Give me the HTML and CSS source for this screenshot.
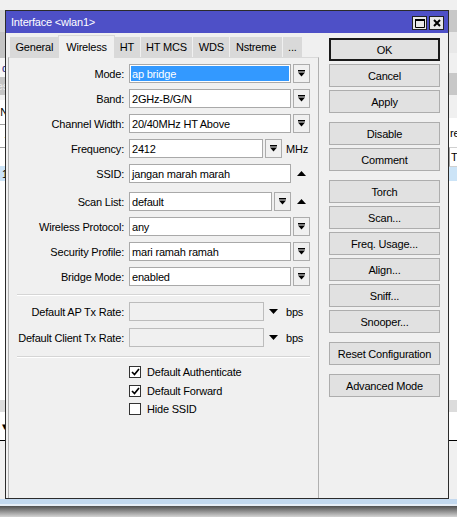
FILE: index.html
```html
<!DOCTYPE html>
<html>
<head>
<meta charset="utf-8">
<title>Interface &lt;wlan1&gt;</title>
<link rel="stylesheet" href="styles.css">
</head>
<body>
<div class="desk">
  <div class="desk-top">
    <div class="strip strip-l">
      <div class="bd c-f0 h10"></div>
      <div class="bd c-d4 h22"></div>
      <div class="bd c-c4 h26"></div>
      <div class="bd c-f7 h19 fr-blue">d</div>
      <div class="bd c-c4 h18 fr-light">es</div>
      <div class="bd c-f0 h5"></div>
      <div class="bd c-ff h24">N</div>
      <div class="bd c-ff h23 line-t">-</div>
      <div class="bd c-ff h19 line-t"></div>
      <div class="bd c-sel h15">1</div>
      <div class="bd c-ff h219"></div>
      <div class="bd c-dc h12"></div>
      <div class="bd c-ff h28">▾</div>
      <div class="bd c-f0 fill line-k"></div>
    </div>
    <div class="desk-mid"></div>
    <div class="strip strip-r">
      <div class="bd c-f0 h10"></div>
      <div class="bd c-c8 h22"></div>
      <div class="bd c-e8 h21"></div>
      <div class="bd c-f0 h20"></div>
      <div class="bd c-c8 h22"></div>
      <div class="bd c-f0 h23"></div>
      <div class="bd c-ff h29">rel</div>
      <div class="bd c-ff h20 hdr">T</div>
      <div class="bd c-sel h14"></div>
      <div class="bd c-ff h219"></div>
      <div class="bd c-dc h12"></div>
      <div class="bd c-ff h28"></div>
      <div class="bd c-f0 fill line-k"></div>
    </div>
  </div>
  <div class="taskbar"></div>
</div>

<div class="win">
  <div class="title">
    <span class="title-text">Interface &lt;wlan1&gt;</span>
    <div class="tbtns">
      <span class="tbtn"><svg width="10" height="9" viewBox="0 0 10 9"><path d="M0.5 0.5h9v8h-9z" fill="none" stroke="#000"/><rect x="0" y="0" width="10" height="2" fill="#000"/></svg></span>
      <span class="tbtn"><svg width="8" height="8" viewBox="0 0 8 8"><path d="M1 1L7 7M7 1L1 7" stroke="#000" stroke-width="2"/></svg></span>
    </div>
  </div>
  <div class="body">
    <div class="left">
      <div class="tabs">
        <div class="tab">General</div>
        <div class="tab sel">Wireless</div>
        <div class="tab">HT</div>
        <div class="tab">HT MCS</div>
        <div class="tab">WDS</div>
        <div class="tab">Nstreme</div>
        <div class="tab">...</div>
      </div>
      <div class="panel">
        <div class="row">
          <span class="lbl">Mode:</span>
          <div class="inp w162 hl"><span class="hl-fill">ap bridge</span></div>
          <span class="dd"><svg width="7" height="7" viewBox="0 0 7 7"><rect x="0" y="0" width="7" height="1.5"/><path d="M0 2.5H7L3.5 6.5z"/></svg></span>
        </div>
        <div class="row">
          <span class="lbl">Band:</span>
          <div class="inp w162">2GHz-B/G/N</div>
          <span class="dd"><svg width="7" height="7" viewBox="0 0 7 7"><rect x="0" y="0" width="7" height="1.5"/><path d="M0 2.5H7L3.5 6.5z"/></svg></span>
        </div>
        <div class="row">
          <span class="lbl">Channel Width:</span>
          <div class="inp w162">20/40MHz HT Above</div>
          <span class="dd"><svg width="7" height="7" viewBox="0 0 7 7"><rect x="0" y="0" width="7" height="1.5"/><path d="M0 2.5H7L3.5 6.5z"/></svg></span>
        </div>
        <div class="row">
          <span class="lbl">Frequency:</span>
          <div class="inp w134">2412</div>
          <span class="dd"><svg width="7" height="7" viewBox="0 0 7 7"><rect x="0" y="0" width="7" height="1.5"/><path d="M0 2.5H7L3.5 6.5z"/></svg></span>
          <span class="unit">MHz</span>
        </div>
        <div class="row gap9">
          <span class="lbl">SSID:</span>
          <div class="inp w162">jangan marah marah</div>
          <span class="up"><svg width="9" height="5" viewBox="0 0 9 5"><path d="M0 5H9L4.5 0z"/></svg></span>
        </div>
        <div class="row">
          <span class="lbl">Scan List:</span>
          <div class="inp w143">default</div>
          <span class="dd"><svg width="7" height="7" viewBox="0 0 7 7"><rect x="0" y="0" width="7" height="1.5"/><path d="M0 2.5H7L3.5 6.5z"/></svg></span>
          <span class="up"><svg width="9" height="5" viewBox="0 0 9 5"><path d="M0 5H9L4.5 0z"/></svg></span>
        </div>
        <div class="row">
          <span class="lbl">Wireless Protocol:</span>
          <div class="inp w162">any</div>
          <span class="dd"><svg width="7" height="7" viewBox="0 0 7 7"><rect x="0" y="0" width="7" height="1.5"/><path d="M0 2.5H7L3.5 6.5z"/></svg></span>
        </div>
        <div class="row">
          <span class="lbl">Security Profile:</span>
          <div class="inp w162">mari ramah ramah</div>
          <span class="dd"><svg width="7" height="7" viewBox="0 0 7 7"><rect x="0" y="0" width="7" height="1.5"/><path d="M0 2.5H7L3.5 6.5z"/></svg></span>
        </div>
        <div class="row">
          <span class="lbl">Bridge Mode:</span>
          <div class="inp w162">enabled</div>
          <span class="dd"><svg width="7" height="7" viewBox="0 0 7 7"><rect x="0" y="0" width="7" height="1.5"/><path d="M0 2.5H7L3.5 6.5z"/></svg></span>
        </div>
        <div class="sep sep1"></div>
        <div class="row gap7">
          <span class="lbl">Default AP Tx Rate:</span>
          <div class="inp w135 dis"></div>
          <span class="down"><svg width="9" height="5" viewBox="0 0 9 5"><path d="M0 0H9L4.5 5z"/></svg></span>
          <span class="bps">bps</span>
        </div>
        <div class="row">
          <span class="lbl">Default Client Tx Rate:</span>
          <div class="inp w135 dis"></div>
          <span class="down"><svg width="9" height="5" viewBox="0 0 9 5"><path d="M0 0H9L4.5 5z"/></svg></span>
          <span class="bps">bps</span>
        </div>
        <div class="sep sep2"></div>
        <div class="chk"><span class="cb"><svg width="9" height="8" viewBox="0 0 9 8"><path d="M1 4L3.5 6.5L8 1" fill="none" stroke="#000" stroke-width="1.7"/></svg></span>Default Authenticate</div>
        <div class="chk"><span class="cb"><svg width="9" height="8" viewBox="0 0 9 8"><path d="M1 4L3.5 6.5L8 1" fill="none" stroke="#000" stroke-width="1.7"/></svg></span>Default Forward</div>
        <div class="chk"><span class="cb"></span>Hide SSID</div>
      </div>
    </div>
    <div class="btns">
      <div class="btn def">OK</div>
      <div class="btn">Cancel</div>
      <div class="btn">Apply</div>
      <div class="btn grp">Disable</div>
      <div class="btn">Comment</div>
      <div class="btn grp">Torch</div>
      <div class="btn">Scan...</div>
      <div class="btn">Freq. Usage...</div>
      <div class="btn">Align...</div>
      <div class="btn">Sniff...</div>
      <div class="btn">Snooper...</div>
      <div class="btn grp">Reset Configuration</div>
      <div class="btn grp">Advanced Mode</div>
    </div>
  </div>
</div>
</body>
</html>
```

FILE: styles.css
```css
* { box-sizing: border-box; }
html, body { margin: 0; padding: 0; }
body {
  width: 457px;
  height: 517px;
  overflow: hidden;
  position: relative;
  font-family: "Liberation Sans", Arial, sans-serif;
  font-size: 11px;
  letter-spacing: -0.2px;
  color: #000;
  background: #f0f0f0;
}

/* background application (partly hidden behind the window) */
.desk { display: flex; flex-direction: column; height: 517px; }
.desk-top { display: flex; height: 499px; }
.strip { display: flex; flex-direction: column; overflow: hidden; }
.strip-l { width: 12px; }
.strip-r { width: 8px; }
.desk-mid { flex: 1; background: #f0f0f0; }
.bd { flex: none; display: flex; align-items: center; overflow: hidden; white-space: nowrap; }
.strip-l .bd { justify-content: flex-end; padding-right: 4px; }
.strip-r .bd { padding-left: 1px; }
.fill { flex: 1; }
.h5 { height: 5px; } .h10 { height: 10px; } .h12 { height: 12px; } .h14 { height: 14px; }
.h15 { height: 15px; } .h18 { height: 18px; } .h19 { height: 19px; } .h20 { height: 20px; }
.h21 { height: 21px; } .h22 { height: 22px; } .h23 { height: 23px; } .h24 { height: 24px; }
.h26 { height: 26px; } .h28 { height: 28px; } .h29 { height: 29px; } .h219 { height: 219px; }
.c-f0 { background: #f0f0f0; } .c-d4 { background: #d4d4d4; } .c-c4 { background: #c4c4c4; }
.c-c8 { background: #c8c8c8; } .c-e8 { background: #e8e8e8; } .c-f7 { background: #f7f7f7; }
.c-ff { background: #fff; } .c-dc { background: #dcdcdc; } .c-sel { background: #cce4f7; }
.fr-blue { color: #1a237e; }
.fr-light { color: #eee; }
.line-t { border-top: 1px solid #a0a0a0; }
.line-k { border-top: 1px solid #000; }
.hdr { border-left: 1px solid #a0a0a0; border-top: 1px solid #d0d0d0; border-bottom: 1px solid #d0d0d0; }
.taskbar {
  height: 18px;
  background: linear-gradient(to bottom, #c3d9ef 0, #c3d9ef 5px, #e6eef7 5px, #e6eef7 7px, #4f4f4f 7px, #d4d4d4 100%);
}

/* window */
.win {
  position: absolute;
  left: 5px;
  top: 10px;
  width: 444px;
  height: 489px;
  border: 1px solid #2b2b2b;
  background: #f0f0f0;
  display: flex;
  flex-direction: column;
}
.title {
  height: 22px;
  flex: none;
  background: #4e50c7;
  color: #fff;
  display: flex;
  align-items: center;
  padding: 0 4px 0 5px;
}
.title-text { flex: 1; }
.tbtns { display: flex; gap: 2px; margin-top: 2px; }
.tbtn {
  width: 15px;
  height: 14px;
  border: 1px solid #222;
  background: #e8e8e8;
  display: flex;
  align-items: center;
  justify-content: center;
}

.body { flex: 1; display: flex; }
.left {
  width: 311px;
  margin-left: 2px;
  margin-top: 2px;
  display: flex;
  flex-direction: column;
}
.tabs { height: 22px; flex: none; display: flex; align-items: flex-end; padding-left: 2px; }
.tab {
  height: 20px;
  padding: 0 5.5px;
  margin-right: 1px;
  background: #d9d9d9;
  display: flex;
  align-items: center;
}
.tab.sel {
  height: 23px;
  padding: 0 7.5px 1px;
  margin: 0 -1px -1px -2px;
  background: #f0f0f0;
  border: 1px solid #d9d9d9;
  border-bottom: none;
  position: relative;
  z-index: 1;
}
.panel {
  flex: 1;
  border: 1px solid #b0b0b0;
  border-top-color: #d9d9d9;
  border-bottom: none;
  padding-top: 6px;
}

.row { display: flex; align-items: center; height: 19px; margin-bottom: 6px; }
.row.gap9 { margin-bottom: 9px; }
.row.gap7 { margin-bottom: 7px; }
.lbl { width: 115px; margin-right: 5px; text-align: right; white-space: nowrap; }
.inp {
  height: 19px;
  border: 1px solid #a9a9a9;
  background: #fff;
  padding: 0 2px;
  display: flex;
  align-items: center;
  overflow: hidden;
  white-space: nowrap;
}
.w162 { width: 162px; } .w143 { width: 143px; } .w135 { width: 135px; } .w134 { width: 134px; }
.inp.hl { padding: 1px; }
.hl-fill {
  flex: 1;
  align-self: stretch;
  background: #3399ff;
  color: #fff;
  padding-left: 1px;
  display: flex;
  align-items: center;
}
.inp.dis { background: #f0f0f0; border-color: #bcbcbc; }
.dd {
  width: 17px;
  height: 19px;
  margin-left: 2px;
  border: 1px solid #acacac;
  background: #f0f0f0;
  display: flex;
  align-items: center;
  justify-content: center;
}
.unit { margin-left: 4px; }
.up { margin-left: 6px; display: flex; }
.down { margin-left: 5px; display: flex; }
.bps { margin-left: 8px; }

.sep { border-top: 1px solid #d5d5d5; border-bottom: 1px solid #fff; margin-left: 8px; margin-right: 8px; }
.sep1 { margin-top: 8px; margin-bottom: 6px; }
.sep2 { margin-top: 9px; margin-bottom: 5px; }

.chk { display: flex; align-items: center; height: 18.5px; padding-left: 120px; }
.cb {
  width: 12px;
  height: 12px;
  border: 1px solid #333;
  background: #fff;
  margin-right: 6px;
  display: flex;
  align-items: center;
  justify-content: center;
}

.btns { width: 111px; margin-left: 10px; margin-top: 5px; display: flex; flex-direction: column; }
.btn {
  height: 23px;
  flex: none;
  margin-bottom: 3px;
  border: 1px solid #adadad;
  background: #e1e1e1;
  display: flex;
  align-items: center;
  justify-content: center;
  white-space: nowrap;
}
.btn.def { border: 2px solid #1a1a1a; }
.btn.grp { margin-top: 6px; }
```
